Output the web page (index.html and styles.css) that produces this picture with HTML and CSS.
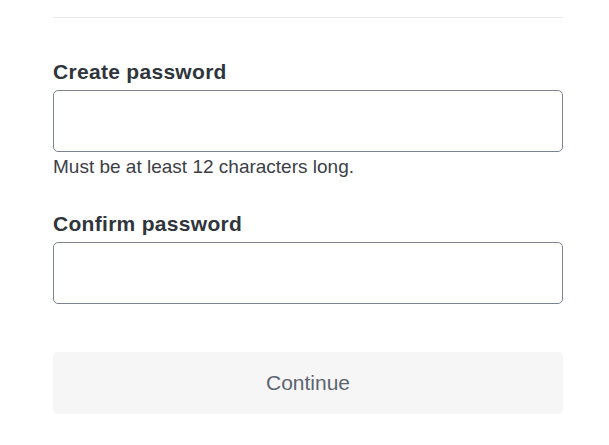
FILE: index.html
```html
<!DOCTYPE html>
<html lang="en">
<head>
<meta charset="utf-8">
<title>Create password</title>
<link rel="stylesheet" href="styles.css">
</head>
<body>
<main class="page">
  <hr class="divider">
  <form class="form">
    <div class="field">
      <label class="label" for="pw">Create password</label>
      <input class="input" id="pw" type="password">
      <p class="hint">Must be at least 12 characters long.</p>
    </div>
    <div class="field field-second">
      <label class="label" for="pw2">Confirm password</label>
      <input class="input" id="pw2" type="password">
    </div>
    <button class="btn" type="button">Continue</button>
  </form>
</main>
</body>
</html>
```
FILE: styles.css
```css
html, body {
  margin: 0;
  padding: 0;
  background: #ffffff;
}
body {
  font-family: "Liberation Sans", Arial, sans-serif;
  color: #2d3339;
}
.page {
  width: 510px;
  margin-left: 53px;
  padding-top: 17px;
}
.divider {
  margin: 0;
  border: 0;
  height: 1px;
  background: #e8ebee;
}
.form {
  display: flex;
  flex-direction: column;
  margin-top: 42px;
}
.field {
  display: flex;
  flex-direction: column;
}
.field-second {
  margin-top: 34px;
}
.label {
  font-size: 21px;
  font-weight: 700;
  line-height: 24px;
  letter-spacing: 0.3px;
  color: #2f353b;
  margin-bottom: 6px;
}
.input {
  box-sizing: border-box;
  height: 62px;
  width: 100%;
  margin: 0;
  border: 1px solid #7d8690;
  border-radius: 5px;
  background: #fff;
  font: inherit;
  padding: 0 14px;
}
.hint {
  margin: 4px 0 0;
  font-size: 19px;
  line-height: 22px;
  color: #3b4046;
}
.btn {
  margin-top: 48px;
  height: 62px;
  width: 100%;
  border: 0;
  border-radius: 5px;
  background: #f6f6f6;
  color: #5b6470;
  font-family: "Liberation Sans", Arial, sans-serif;
  font-size: 21px;
  display: flex;
  align-items: center;
  justify-content: center;
}
```
